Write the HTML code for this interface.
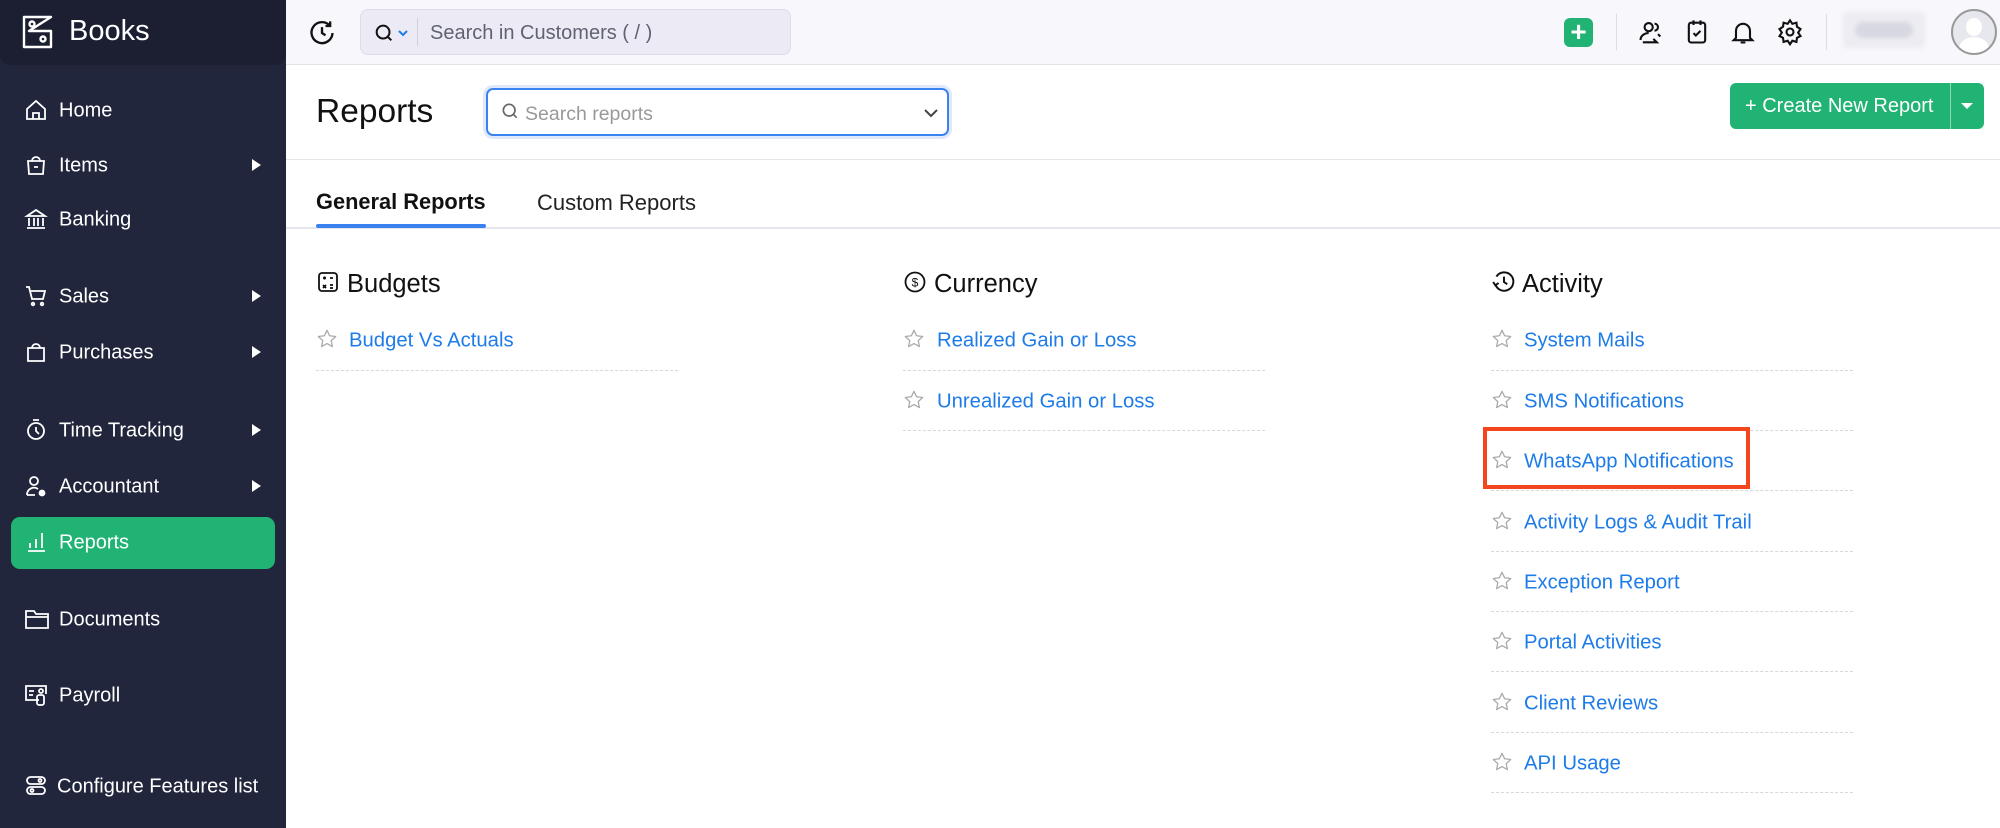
<!DOCTYPE html>
<html><head><meta charset="utf-8"><style>
*{box-sizing:border-box;margin:0;padding:0}
body{width:2000px;height:828px;overflow:hidden;font-family:"Liberation Sans",sans-serif;background:#fff;position:relative}
.sb{position:absolute;left:0;top:0;width:286px;height:828px;background:#21263c}
.logo{position:absolute;left:0;top:0;width:286px;height:65px;background:#1b1f31;border-radius:0 0 10px 10px}
.logo span{position:absolute;left:69px;top:15px;color:#fff;font-size:29px}
.nav{position:absolute;left:59px;color:#fff;font-size:20px;transform:translateY(-45%)}
.ic{position:absolute;left:24px;transform:translateY(-50%)}
.arr{position:absolute;left:252px;width:0;height:0;border-left:9px solid #fff;border-top:6px solid transparent;border-bottom:6px solid transparent;transform:translateY(-50%)}
.hl{position:absolute;left:11px;top:517px;width:264px;height:52px;background:#21b374;border-radius:9px}
.top{position:absolute;left:286px;top:0;right:0;height:65px;background:#f7f7fc;border-bottom:1px solid #e3e4ea}
.abs{position:absolute}
.link{position:absolute;color:#1e7ce8;font-size:20.3px;transform:translateY(-42%)}
.star{position:absolute;transform:translateY(-50%)}
.dl{position:absolute;height:0;border-top:1px dashed #d8d8dc}
.sec{position:absolute;font-size:25.5px;color:#111;transform:translateY(-45%)}
</style></head><body>
<div class="sb">
 <div class="logo">
  <svg class="abs" style="left:21px;top:14px" width="36" height="36" viewBox="0 0 36 36" fill="none" stroke="#fff" stroke-width="2.4" stroke-linejoin="round"><path d="M3 3h27l-22 14 22 0v16H3z"/><circle cx="11" cy="10" r="2.5"/><circle cx="22" cy="25" r="2.5"/></svg>
  <span>Books</span>
 </div>
 <div class="hl"></div>
 <svg class="ic" style="top:110px" width="24" height="24" viewBox="0 0 24 24" fill="none" stroke="#fff" stroke-width="1.8"><path d="M3 11L12 3l9 8v10H3z M9 21v-6h6v6"/></svg><div class="nav" style="top:110px">Home</div>
 <svg class="ic" style="top:165px" width="24" height="24" viewBox="0 0 24 24" fill="none" stroke="#fff" stroke-width="1.8"><path d="M4 8h16l-1 13H5z M8 8a4 4 0 0 1 8 0 M10 14h4"/></svg><div class="nav" style="top:165px">Items</div><div class="arr" style="top:165px"></div>
 <svg class="ic" style="top:219px" width="24" height="24" viewBox="0 0 24 24" fill="none" stroke="#fff" stroke-width="1.8"><path d="M3 9l9-6 9 6z M5 11v8 M10 11v8 M14 11v8 M19 11v8 M3 21h18"/></svg><div class="nav" style="top:219px">Banking</div>
 <svg class="ic" style="top:296px" width="24" height="24" viewBox="0 0 24 24" fill="none" stroke="#fff" stroke-width="1.8"><path d="M2 3h3l3 12h11l2-8H7"/><circle cx="9" cy="20" r="1.3"/><circle cx="18" cy="20" r="1.3"/></svg><div class="nav" style="top:296px">Sales</div><div class="arr" style="top:296px"></div>
 <svg class="ic" style="top:352px" width="24" height="24" viewBox="0 0 24 24" fill="none" stroke="#fff" stroke-width="1.8"><path d="M4 8h16v13H4z M8 8a4 4 0 0 1 8 0"/></svg><div class="nav" style="top:352px">Purchases</div><div class="arr" style="top:352px"></div>
 <svg class="ic" style="top:430px" width="24" height="24" viewBox="0 0 24 24" fill="none" stroke="#fff" stroke-width="1.8"><circle cx="12" cy="13" r="8"/><path d="M12 9v4l3 3 M9 2h6"/></svg><div class="nav" style="top:430px">Time Tracking</div><div class="arr" style="top:430px"></div>
 <svg class="ic" style="top:486px" width="24" height="24" viewBox="0 0 24 24" fill="none" stroke="#fff" stroke-width="1.8"><circle cx="10" cy="7" r="4"/><path d="M3 21a7 7 0 0 1 11-6 M3 21h8"/><circle cx="18" cy="19" r="2.5" fill="#fff"/></svg><div class="nav" style="top:486px">Accountant</div><div class="arr" style="top:486px"></div>
 <svg class="ic" style="top:542px" width="24" height="24" viewBox="0 0 24 24" fill="none" stroke="#fff" stroke-width="1.8"><path d="M4 21h17 M6 13v5 M12 9v9 M18 3v15"/></svg><div class="nav" style="top:542px">Reports</div>
 <svg class="ic" style="top:619px" width="26" height="24" viewBox="0 0 26 24" fill="none" stroke="#fff" stroke-width="1.8"><path d="M2 4h8l2 3h12v14H2z M2 10h22"/></svg><div class="nav" style="top:619px">Documents</div>
 <svg class="ic" style="top:695px" width="24" height="24" viewBox="0 0 24 24" fill="none" stroke="#fff" stroke-width="1.8"><path d="M15 17H2V3h20v8 M5 8h5 M5 12h4"/><circle cx="17" cy="8" r="2"/><rect x="13" y="12" width="7" height="10" rx="2"/></svg><div class="nav" style="top:695px">Payroll</div>
 <svg class="ic" style="top:786px" width="24" height="24" viewBox="0 0 24 24" fill="none" stroke="#fff" stroke-width="1.8"><rect x="3" y="3" width="18" height="7" rx="3.5"/><rect x="3" y="13" width="18" height="7" rx="3.5"/><circle cx="16" cy="6.5" r="1.5"/><circle cx="8" cy="16.5" r="1.5"/></svg><div class="nav" style="top:786px;left:57px">Configure Features list</div>
</div>

<div class="top">
 <svg class="abs" style="left:22px;top:19px" width="28" height="28" viewBox="0 0 24 24" fill="none" stroke="#111" stroke-width="2"><path d="M19 6A9 9 0 1 0 21 12 M19 2v4h-4 M12 7v5l3 2"/></svg>
 <div class="abs" style="left:74px;top:9px;width:431px;height:46px;background:#ecebf5;border:1px solid #dcdce6;border-radius:8px">
  <svg class="abs" style="left:12px;top:12px" width="22" height="22" viewBox="0 0 24 24" fill="none" stroke="#111" stroke-width="2.2"><circle cx="11" cy="11" r="7"/><path d="M16 16l4 4"/></svg>
  <svg class="abs" style="left:37px;top:19px" width="10" height="8" viewBox="0 0 10 8" fill="none" stroke="#1e7ce8" stroke-width="2"><path d="M1 2l4 4 4-4"/></svg>
  <div class="abs" style="left:56px;top:8px;width:1px;height:28px;background:#cfd0da"></div>
  <div class="abs" style="left:69px;top:12px;font-size:20px;color:#606272">Search in Customers ( / )</div>
 </div>
 <div class="abs" style="left:1278px;top:18px;width:29px;height:29px;background:#21b374;border-radius:6px;color:#fff;font-size:28px;line-height:27px;text-align:center;font-weight:bold">+</div>
 <div class="abs" style="left:1330px;top:14px;width:1px;height:36px;background:#dcdce4"></div>
 <svg class="abs" style="left:1351px;top:19px" width="28" height="28" viewBox="0 0 24 24" fill="none" stroke="#111" stroke-width="1.8"><circle cx="10" cy="7" r="3.5"/><path d="M15 4a3 3 0 0 1 0 6 M3 18c0-4 4-6 7-6 M5 20h12l-3-3 M18 13l2 2"/></svg>
 <svg class="abs" style="left:1397px;top:18px" width="28" height="28" viewBox="0 0 24 24" fill="none" stroke="#111" stroke-width="1.8"><rect x="5" y="4" width="14" height="17" rx="2"/><path d="M9 2v4 M15 2v4 M9 13l2 2 4-4"/></svg>
 <svg class="abs" style="left:1443px;top:18px" width="28" height="28" viewBox="0 0 24 24" fill="none" stroke="#111" stroke-width="1.8"><path d="M6 17V11a6 6 0 0 1 12 0v6l2 2H4z M10 21h4"/></svg>
 <svg class="abs" style="left:1490px;top:18px" width="28" height="28" viewBox="0 0 24 24" fill="none" stroke="#111" stroke-width="1.8"><circle cx="12" cy="12" r="3"/><path d="M12 2l2 3 3.5-1 .5 3.5 3 2-2 3 2 3-3 1.5-.5 3.5-3.5-1-2 3-2-3-3.5 1-.5-3.5-3-1.5 2-3-2-3 3-2 .5-3.5 3.5 1z"/></svg>
 <div class="abs" style="left:1540px;top:14px;width:1px;height:36px;background:#dcdce4"></div>
 <div class="abs" style="left:1557px;top:12px;width:82px;height:36px;background:#ececf2;border-radius:4px;filter:blur(2px)"><div style="margin:10px 12px;height:16px;background:#d8d8e2;border-radius:8px"></div></div>
 <div class="abs" style="left:1665px;top:9px;width:46px;height:46px;border-radius:50%;border:2px solid #999;background:#e6e8ee;overflow:hidden"><div style="position:absolute;left:13px;top:7px;width:16px;height:18px;border-radius:50%;background:#fff"></div><div style="position:absolute;left:6px;top:26px;width:30px;height:24px;border-radius:50% 50% 0 0;background:#fff"></div></div>
</div>

<div class="abs" style="left:316px;top:93px;font-size:33.5px;color:#111">Reports</div>
<div class="abs" style="left:486px;top:88px;width:463px;height:48px;border:2px solid #3b82f0;border-radius:7px;box-shadow:0 0 0 3px #dfe9fb">
 <svg class="abs" style="left:12px;top:11px" width="20" height="20" viewBox="0 0 24 24" fill="none" stroke="#666" stroke-width="2"><circle cx="11" cy="11" r="7"/><path d="M16 16l4 4"/></svg>
 <div class="abs" style="left:37px;top:13px;font-size:19.5px;color:#999">Search reports</div>
 <svg class="abs" style="left:436px;top:19px" width="14" height="9" viewBox="0 0 14 9" fill="none" stroke="#444" stroke-width="2"><path d="M1 1l6 6 6-6"/></svg>
</div>
<div class="abs" style="left:1730px;top:83px;width:254px;height:46px;background:#21b374;border-radius:6px;color:#fff;font-size:20px">
 <div class="abs" style="left:15px;top:12px">+ Create New Report</div>
 <div class="abs" style="left:220px;top:0;width:1px;height:46px;background:#8fd9b6"></div>
 <div class="abs" style="left:231px;top:20px;border-top:6px solid #fff;border-left:6px solid transparent;border-right:6px solid transparent"></div>
</div>
<div class="abs" style="left:286px;top:159px;right:0;height:1px;background:#e5e6eb"></div>
<div class="abs" style="left:316px;top:189px;font-size:21.8px;font-weight:bold;color:#111">General Reports</div>
<div class="abs" style="left:537px;top:190px;font-size:22px;color:#222">Custom Reports</div>
<div class="abs" style="left:286px;top:227px;right:0;height:2px;background:#e6e7ec"></div>
<div class="abs" style="left:316px;top:224px;width:170px;height:4px;background:#3b82f0;border-radius:2px"></div>

<svg class="abs" style="left:316px;top:270px" width="24" height="24" viewBox="0 0 24 24" fill="none" stroke="#111" stroke-width="1.8"><rect x="3" y="3" width="18" height="18" rx="3"/><path d="M7 8h3 M8.5 6.5v3 M14 8h3 M7 15l3 3 M10 15l-3 3 M14 15h3 M14 18h3"/></svg>
<div class="sec" style="left:347px;top:283px">Budgets</div>
<svg class="abs" style="left:903px;top:270px" width="24" height="24" viewBox="0 0 24 24" fill="none" stroke="#111" stroke-width="1.8"><circle cx="12" cy="12" r="9.5"/><text x="12" y="16.5" font-size="12" text-anchor="middle" fill="#111" stroke="none" font-family="Liberation Sans">$</text></svg>
<div class="sec" style="left:934px;top:283px">Currency</div>
<svg class="abs" style="left:1491px;top:269px" width="26" height="26" viewBox="0 0 24 24" fill="none" stroke="#111" stroke-width="1.8"><path d="M4 14a8.5 8.5 0 1 0 1-7 M12 7v5l3 2 M2 12l2 3 3-2"/></svg>
<div class="sec" style="left:1522px;top:283px">Activity</div>

<svg width="0" height="0" style="position:absolute"><defs><symbol id="st" viewBox="0 0 24 24"><path d="M12 2.5l2.9 6 6.6.8-4.9 4.5 1.3 6.5L12 17l-5.9 3.3 1.3-6.5L2.5 9.3l6.6-.8z" fill="none" stroke="#aaa" stroke-width="1.4" stroke-linejoin="round"/></symbol></defs></svg>

<svg class="star" style="left:316px;top:339px" width="22" height="22"><use href="#st"/></svg><div class="link" style="left:349px;top:339px">Budget Vs Actuals</div><div class="dl" style="left:316px;top:370px;width:362px"></div>

<svg class="star" style="left:903px;top:339px" width="22" height="22"><use href="#st"/></svg><div class="link" style="left:937px;top:339px">Realized Gain or Loss</div><div class="dl" style="left:903px;top:370px;width:362px"></div>
<svg class="star" style="left:903px;top:400px" width="22" height="22"><use href="#st"/></svg><div class="link" style="left:937px;top:400px">Unrealized Gain or Loss</div><div class="dl" style="left:903px;top:430px;width:362px"></div>

<svg class="star" style="left:1491px;top:339px" width="22" height="22"><use href="#st"/></svg><div class="link" style="left:1524px;top:339px">System Mails</div><div class="dl" style="left:1491px;top:370px;width:362px"></div>
<svg class="star" style="left:1491px;top:400px" width="22" height="22"><use href="#st"/></svg><div class="link" style="left:1524px;top:400px">SMS Notifications</div><div class="dl" style="left:1491px;top:430px;width:362px"></div>
<svg class="star" style="left:1491px;top:460px" width="22" height="22"><use href="#st"/></svg><div class="link" style="left:1524px;top:460px">WhatsApp Notifications</div><div class="dl" style="left:1491px;top:490px;width:362px"></div>
<svg class="star" style="left:1491px;top:521px" width="22" height="22"><use href="#st"/></svg><div class="link" style="left:1524px;top:521px">Activity Logs &amp; Audit Trail</div><div class="dl" style="left:1491px;top:551px;width:362px"></div>
<svg class="star" style="left:1491px;top:581px" width="22" height="22"><use href="#st"/></svg><div class="link" style="left:1524px;top:581px">Exception Report</div><div class="dl" style="left:1491px;top:611px;width:362px"></div>
<svg class="star" style="left:1491px;top:641px" width="22" height="22"><use href="#st"/></svg><div class="link" style="left:1524px;top:641px">Portal Activities</div><div class="dl" style="left:1491px;top:671px;width:362px"></div>
<svg class="star" style="left:1491px;top:702px" width="22" height="22"><use href="#st"/></svg><div class="link" style="left:1524px;top:702px">Client Reviews</div><div class="dl" style="left:1491px;top:732px;width:362px"></div>
<svg class="star" style="left:1491px;top:762px" width="22" height="22"><use href="#st"/></svg><div class="link" style="left:1524px;top:762px">API Usage</div><div class="dl" style="left:1491px;top:792px;width:362px"></div>

<div class="abs" style="left:1483px;top:427px;width:267px;height:62px;border:4px solid #f4461e"></div>
</body></html>
